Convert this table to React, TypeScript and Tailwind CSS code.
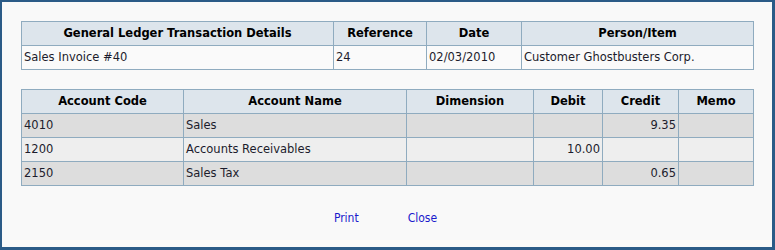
import React from "react";

const font = { fontFamily: '"DejaVu Sans", Verdana, sans-serif' };
const linkFont = { fontFamily: '"DejaVu Sans Condensed", Tahoma, sans-serif' };

type Line = { code: string; name: string; dim: string; debit: string; credit: string; memo: string };

const lines: Line[] = [
  { code: "4010", name: "Sales", dim: "", debit: "", credit: "9.35", memo: "" },
  { code: "1200", name: "Accounts Receivables", dim: "", debit: "10.00", credit: "", memo: "" },
  { code: "2150", name: "Sales Tax", dim: "", debit: "", credit: "0.65", memo: "" },
];

const th = "border border-[#8fabbf] bg-[#dde5ec] h-[24px] p-0 text-center font-bold text-[11.5px] text-black";
const td = "border border-[#8fabbf] h-[24px] py-0 px-[2px] text-[11.5px] text-[#1c1c2c]";

export default function App() {
  return (
    <div
      className="w-[775px] h-[250px] bg-[#f9f9f9] border-[#2b5b87] border-l-2 border-t-2 border-r-[3px] border-b-[3px] pt-[19px] pl-[19px] box-border"
      style={font}
    >
      <table className="border-collapse table-fixed w-[732px]">
        <colgroup>
          <col className="w-[312px]" />
          <col className="w-[93px]" />
          <col className="w-[95px]" />
          <col className="w-[232px]" />
        </colgroup>
        <thead>
          <tr>
            <th className={th}>General Ledger Transaction Details</th>
            <th className={th}>Reference</th>
            <th className={th}>Date</th>
            <th className={th}>Person/Item</th>
          </tr>
        </thead>
        <tbody>
          <tr className="bg-[#fafafa]">
            <td className={td}>Sales Invoice #40</td>
            <td className={td}>24</td>
            <td className={td}>02/03/2010</td>
            <td className={td}>Customer Ghostbusters Corp.</td>
          </tr>
        </tbody>
      </table>

      <table className="border-collapse table-fixed w-[732px] mt-[19px]">
        <colgroup>
          <col className="w-[162px]" />
          <col className="w-[223px]" />
          <col className="w-[127px]" />
          <col className="w-[69px]" />
          <col className="w-[76px]" />
          <col className="w-[75px]" />
        </colgroup>
        <thead>
          <tr>
            <th className={th}>Account Code</th>
            <th className={th}>Account Name</th>
            <th className={th}>Dimension</th>
            <th className={th}>Debit</th>
            <th className={th}>Credit</th>
            <th className={th}>Memo</th>
          </tr>
        </thead>
        <tbody>
          {lines.map((l, i) => (
            <tr key={l.code} className={i % 2 === 0 ? "bg-[#dddddd]" : "bg-[#eeeeee]"}>
              <td className={td}>{l.code}</td>
              <td className={td}>{l.name}</td>
              <td className={td}>{l.dim}</td>
              <td className={td + " text-right"}>{l.debit}</td>
              <td className={td + " text-right"}>{l.credit}</td>
              <td className={td}>{l.memo}</td>
            </tr>
          ))}
        </tbody>
      </table>

      <div className="flex justify-center gap-[49px] mt-[23px] pr-[22px]">
        <a className="text-[12px] text-[#1a1acc] cursor-pointer" style={linkFont}>Print</a>
        <a className="text-[12px] text-[#1a1acc] cursor-pointer" style={linkFont}>Close</a>
      </div>
    </div>
  );
}
